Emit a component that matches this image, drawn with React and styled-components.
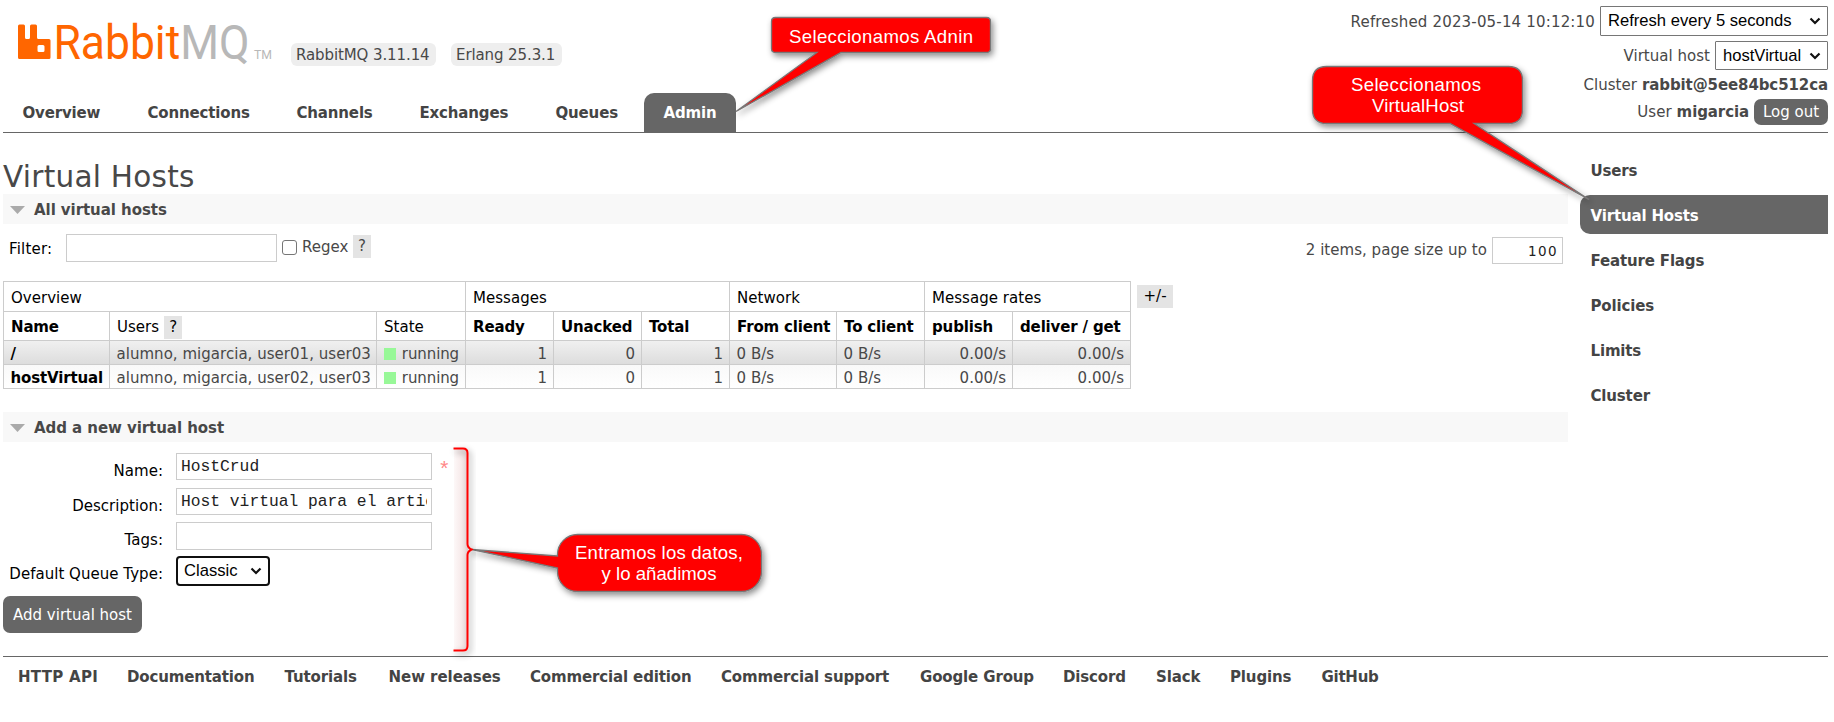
import React from "react";
import styled, { createGlobalStyle } from "styled-components";

const Global = createGlobalStyle`
  * { box-sizing: border-box; }
  body { margin: 0; background: #fff; color: #484848; font: 15px/20px Verdana, "DejaVu Sans", sans-serif; letter-spacing: 0.03px; }
  b { letter-spacing: -0.1px; }
`;

const Page = styled.div`
  position: relative;
  width: 1834px;
  height: 722px;
  overflow: hidden;
  padding: 0 6px 0 3px;
`;
const Header = styled.header`
  display: flex;
  justify-content: space-between;
  height: 133px;
  border-bottom: 1px solid #666;
`;
const Brand = styled.div`
  display: flex;
  height: 93px;
`;
const Logo = styled.svg`
  width: 288px;
  height: 72px;
  letter-spacing: 0;
`;
const Version = styled.span`
  height: 23px;
  margin: 43px 15px 0 0;
  width: ${(p) => p.$w}px;
  padding: 2px 5px;
  border-radius: 6px;
  background: #eee;
  letter-spacing: -0.1px;
  white-space: nowrap;
`;
const Tabs = styled.nav`
  display: flex;
  gap: 7px;
`;
const Tab = styled.a`
  width: ${(p) => p.$w}px;
  height: 39px;
  padding: 10px 0 0 19.5px;
  border-radius: 10px 10px 0 0;
  font-weight: bold;
  letter-spacing: -0.16px;
  white-space: nowrap;
  color: ${(p) => (p.$on ? "#fff" : "#444")};
  background: ${(p) => (p.$on ? "#666" : "none")};
`;
const Account = styled.div`
  display: flex;
  flex-direction: column;
  align-items: flex-end;
  padding-top: 6px;
`;
const AccountRow = styled.div`
  display: flex;
  align-items: center;
  gap: 5px;
  height: ${(p) => p.$h}px;
  white-space: nowrap;
`;
const Refreshed = styled.span`
  padding-top: 2px;
  letter-spacing: 0.17px;
`;
const Picker = styled.div`
  display: flex;
  align-items: center;
  justify-content: space-between;
  width: ${(p) => p.$w}px;
  height: ${(p) => p.$h}px;
  padding: 0 6px 0 ${(p) => (p.$focus ? 6 : 7)}px;
  border: ${(p) => (p.$focus ? "2px solid #101010" : "1px solid #767676")};
  border-radius: ${(p) => (p.$focus ? 4 : 1)}px;
  background: #fff;
  color: #000;
  font: 16.6px/20px Arial, "Liberation Sans", sans-serif;
  letter-spacing: 0;
  svg { width: 12px; height: 8px; }
`;
const Button = styled.button`
  width: ${(p) => p.$w}px;
  height: ${(p) => p.$h}px;
  padding: 0;
  border: 0;
  border-radius: 7px;
  background: #666;
  color: #fff;
  font: inherit;
  letter-spacing: 0;
`;
const Body = styled.div`
  display: flex;
  justify-content: space-between;
  height: 523px;
`;
const Main = styled.main`
  width: 1565px;
  padding-top: 25px;
`;
const Title = styled.h1`
  margin: 0;
  height: 36px;
  font-size: 29.5px;
  line-height: 39px;
  font-weight: normal;
  letter-spacing: 0.26px;
`;
const SectionBar = styled.h2`
  display: flex;
  align-items: center;
  gap: 9px;
  height: 30px;
  margin: 0;
  padding: 2px 0 0 7px;
  background: #f8f8f8;
  font-size: 15px;
  letter-spacing: -0.06px;
  svg { width: 15px; height: 8px; }
`;
const FilterRow = styled.div`
  display: flex;
  align-items: flex-start;
  height: 57px;
  padding: 10px 5px 0 6px;
`;
const FilterLabel = styled.label`
  width: 57px;
  padding-top: 5px;
  color: #000;
  letter-spacing: 0.2px;
`;
const Field = styled.input`
  width: ${(p) => p.$w}px;
  height: ${(p) => p.$h || 27}px;
  padding: 0 4px;
  border: 1px solid #ccc;
  outline: 0;
  color: #222;
  font: 16.3px "Courier New", "Liberation Mono", monospace;
  letter-spacing: 0;
`;
const SizeField = styled(Field)`
  font: 13.5px Verdana, "DejaVu Sans", sans-serif;
  letter-spacing: 1.4px;
  text-align: right;
`;
const Check = styled.span`
  width: 15px;
  height: 15px;
  margin: 6px 5px 0 5px;
  border: 1px solid #767676;
  border-radius: 3px;
`;
const RegexLabel = styled.span`
  width: 51px;
  padding-top: 3px;
`;
const Help = styled.span`
  display: inline-block;
  width: ${(p) => p.$w || 18}px;
  height: 23px;
  margin: ${(p) => p.$m || "0"};
  background: #e4e4e4;
  line-height: 23px;
  text-align: center;
`;
const PageSize = styled.div`
  display: flex;
  gap: 5px;
  margin: 3px 0 0 auto;
  line-height: 26px;
`;
const TableRow = styled.div`
  display: flex;
  align-items: flex-start;
  height: 131px;
  gap: 6px;
  color: #000;
`;
const Table = styled.table`
  table-layout: fixed;
  width: 1128px;
  border-collapse: collapse;
`;
const Th = styled.th`
  height: ${(p) => p.$h}px;
  padding: 2px 0 0 7px;
  border: 1px solid #ccc;
  text-align: left;
  white-space: nowrap;
  font-weight: ${(p) => (p.$bold ? "bold" : "normal")};
  letter-spacing: ${(p) => (p.$bold ? -0.16 : 0.03)}px;
`;
const Td = styled.td`
  height: 24px;
  padding: 2px 6px 0 6.5px;
  border: 1px solid #ccc;
  white-space: nowrap;
  text-align: ${(p) => (p.$right ? "right" : "left")};
  color: ${(p) => (p.$name ? "#000" : "#484848")};
  font-weight: ${(p) => (p.$name ? "bold" : "normal")};
  letter-spacing: ${(p) => (p.$name ? -0.14 : 0.03)}px;
`;
const Tr = styled.tr`
  background: ${(p) => (p.$alt ? "linear-gradient(#f0f0f0, #dcdcdc)" : "linear-gradient(#f9f9f9, #fff)")};
`;
const State = styled.span`
  display: flex;
  align-items: center;
  gap: 6px;
  letter-spacing: -0.1px;
  &::before { content: ""; width: 13px; height: 12px; background: #98f898; }
`;
const Form = styled.div`
  display: grid;
  grid-template-columns: 160px auto 1fr;
  grid-template-rows: 35px 34px 34px 40px;
  column-gap: 13px;
  padding-top: 11px;
`;
const FormLabel = styled.label`
  padding-top: 8px;
  color: #000;
  text-align: right;
  white-space: nowrap;
`;
const Required = styled.span`
  margin-left: -7px;
  padding-top: 8px;
  color: #f88;
  font: 21px/20px "Courier New", "Liberation Mono", monospace;
`;
const Side = styled.aside`
  width: 248px;
  padding-top: 17px;
`;
const SideLink = styled.a`
  display: block;
  height: 39px;
  margin-bottom: 6px;
  padding: 11px 0 0 10.5px;
  border-radius: 10px 0 0 10px;
  font-weight: bold;
  letter-spacing: -0.16px;
  color: ${(p) => (p.$on ? "#fff" : "#444")};
  background: ${(p) => (p.$on ? "#666" : "none")};
`;
const Footer = styled.footer`
  display: flex;
  gap: 30px;
  padding: 10px 15px;
  border-top: 1px solid #666;
  color: #444;
  font-weight: bold;
  letter-spacing: -0.12px;
`;
const FooterLink = styled.a`
  width: ${(p) => p.$w}px;
  letter-spacing: ${(p) => p.$ls}px;
  white-space: nowrap;
`;
const Annotations = styled.svg`
  position: absolute;
  left: 0;
  top: 0;
  pointer-events: none;
  text { font-family: Arial, "Liberation Sans", sans-serif; font-size: 18.6px; fill: #fff; letter-spacing: 0; }
`;

const Arrow = () => (
  <svg viewBox="0 0 12 8"><path d="M1.5 1.5 6 6l4.500-4.500" fill="none" stroke="#111" strokeWidth="2.200" /></svg>
);
const Triangle = () => (
  <svg viewBox="0 0 15 8"><path d="M0 0h15L7.500 8z" fill="#aaa" /></svg>
);

const tabs = [["Overview", 118], ["Connections", 142], ["Channels", 116], ["Exchanges", 129], ["Queues", 101], ["Admin", 92, true]];
const cols = [106, 267, 89, 88, 88, 88, 107, 88, 88, 118];
const rows = [
  ["/", "alumno, migarcia, user01, user03", "running", "1", "0", "1", "0 B/s", "0 B/s", "0.00/s", "0.00/s"],
  ["hostVirtual", "alumno, migarcia, user02, user03", "running", "1", "0", "1", "0 B/s", "0 B/s", "0.00/s", "0.00/s"],
];
const heads = ["Name", "Users", "State", "Ready", "Unacked", "Total", "From client", "To client", "publish", "deliver / get"];
const links = [["HTTP API", 79, 0.3], ["Documentation", 127.5], ["Tutorials", 74], ["New releases", 111.5, -0.05], ["Commercial edition", 161], ["Commercial support", 169], ["Google Group", 113], ["Discord", 63], ["Slack", 44], ["Plugins", 61.5], ["GitHub", 60, -0.25]];

const Callout = ({ d, lines }) => (
  <g>
    <path d={d} fill="#f00" stroke="#787878" strokeWidth="1.300" filter="url(#drop)" />
    {lines.map(([t, x, y, w]) => <text key={t} x={x} y={y} textLength={w}>{t}</text>)}
  </g>
);

export default function App() {
  return (
    <Page>
      <Global />
      <Header>
        <div>
          <Brand>
            <Logo viewBox="3 0 288 72">
              <path fill="#f60" fillRule="evenodd" d="M19.500 24.500h4q1.500 0 1.500 1.500v11.500q0 1.500 1.500 1.500h2q1.500 0 1.500-1.500V26q0-1.500 1.500-1.500h4Q37 24.500 37 26v11.500q0 1.500 1.500 1.500H49q1.500 0 1.500 1.500V57.500q0 1.500-1.500 1.500H19.500Q18 59 18 57.500V26q0-1.500 1.500-1.500zM39 45q-1.500 0-1.500 1.500v4q0 1.500 1.500 1.500h4q1.500 0 1.500-1.500v-4Q44.500 45 43 45z" />
              <text x="53.500" y="59" fontFamily="Roboto" fontSize="48.500" fill="#f60" textLength="196" lengthAdjust="spacingAndGlyphs">Rabbit<tspan fill="#b8b8b8">MQ</tspan></text>
              <text x="254" y="59" fontFamily="Roboto" fontSize="12.500" fill="#b8b8b8" textLength="18" lengthAdjust="spacingAndGlyphs">TM</text>
            </Logo>
            <Version $w={145}>RabbitMQ 3.11.14</Version>
            <Version $w={111}>Erlang 25.3.1</Version>
          </Brand>
          <Tabs>{tabs.map(([t, w, on]) => <Tab key={t} $w={w} $on={on}>{t}</Tab>)}</Tabs>
        </div>
        <Account>
          <AccountRow $h={30}><Refreshed>Refreshed 2023-05-14 10:12:10</Refreshed><Picker $w={228} $h={30}>Refresh every 5 seconds<Arrow /></Picker></AccountRow>
          <AccountRow $h={39}>Virtual host<Picker $w={113} $h={29}>hostVirtual<Arrow /></Picker></AccountRow>
          <AccountRow $h={20}>Cluster <b>rabbit@5ee84bc512ca</b></AccountRow>
          <AccountRow $h={33}>User <b>migarcia</b><Button $w={74} $h={26}>Log out</Button></AccountRow>
        </Account>
      </Header>
      <Body>
        <Main>
          <Title>Virtual Hosts</Title>
          <SectionBar><Triangle />All virtual hosts</SectionBar>
          <FilterRow>
            <FilterLabel>Filter:</FilterLabel>
            <Field $w={211} $h={28} />
            <Check />
            <RegexLabel>Regex</RegexLabel>
            <Help $m="1px 0 0">?</Help>
            <PageSize>2 items, page size up to<SizeField $w={71} defaultValue="100" /></PageSize>
          </FilterRow>
          <TableRow>
            <Table>
              <colgroup>{cols.map((w, i) => <col key={i} width={w} />)}</colgroup>
              <thead>
                <tr><Th $h={30} colSpan={3}>Overview</Th><Th colSpan={3}>Messages</Th><Th colSpan={2}>Network</Th><Th colSpan={2}>Message rates</Th></tr>
                <tr>{heads.map((h, i) => <Th key={h} $h={29} $bold={i !== 1 && i !== 2}>{h}{i === 1 && <Help $m="0 0 0 5px">?</Help>}</Th>)}</tr>
              </thead>
              <tbody>
                {rows.map((r, n) => (
                  <Tr key={n} $alt={n === 0}>
                    {r.map((c, i) => <Td key={i} $name={i === 0} $right={(i > 2 && i < 6) || i > 7}>{i === 2 ? <State>{c}</State> : c}</Td>)}
                  </Tr>
                ))}
              </tbody>
            </Table>
            <Help $w={36} $m="4px 0 0">+/-</Help>
          </TableRow>
          <SectionBar><Triangle />Add a new virtual host</SectionBar>
          <Form>
            <FormLabel>Name:</FormLabel><Field $w={256} defaultValue="HostCrud" /><Required>*</Required>
            <FormLabel>Description:</FormLabel><Field $w={256} defaultValue="Host virtual para el articulo" /><span />
            <FormLabel>Tags:</FormLabel><Field $w={256} $h={28} /><span />
            <FormLabel>Default Queue Type:</FormLabel><Picker $focus $w={94} $h={30}>Classic<Arrow /></Picker><span />
          </Form>
          <Button $w={139} $h={37}>Add virtual host</Button>
        </Main>
        <Side>{["Users", "Virtual Hosts", "Feature Flags", "Policies", "Limits", "Cluster"].map((t) => <SideLink key={t} $on={t === "Virtual Hosts"}>{t}</SideLink>)}</Side>
      </Body>
      <Footer>{links.map(([t, w, ls = -0.14]) => <FooterLink key={t} $w={w} $ls={ls}>{t}</FooterLink>)}</Footer>
      <Annotations width="1834" height="722">
        <defs>
          <filter id="drop" x="-20%" y="-30%" width="140%" height="170%"><feDropShadow dx="2" dy="3" stdDeviation="3" floodColor="#000" floodOpacity="0.45" /></filter>
          <linearGradient id="shade"><stop offset="0" stopColor="#fdf8f8" /><stop offset="1" stopColor="#f1dede" /></linearGradient>
        </defs>
        <Callout d="M775.500 17.500H986.500Q990.500 17.500 990.500 21.500V48.500Q990.500 52.500 986.500 52.500H841L736 111.500 817 52.500H775.500Q771.500 52.500 771.500 48.500V21.500Q771.500 17.500 775.500 17.500Z" lines={[["Seleccionamos Adnin", 789, 43, 184]]} />
        <Callout d="M1326.500 66.500H1508.500Q1522.500 66.500 1522.500 80.500V109.500Q1522.500 123.500 1508.500 123.500H1474L1589 199.500 1450 123.500H1326.500Q1312.500 123.500 1312.500 109.500V80.500Q1312.500 66.500 1326.500 66.500Z" lines={[["Seleccionamos", 1351, 91, 130], ["VirtualHost", 1372, 112, 92]]} />
        <Callout d="M577.500 534.500H741.500A20 20 0 0 1 761.500 554.500V571.500A20 20 0 0 1 741.500 591.500H577.500A20 20 0 0 1 557.500 571.500V568L472 549.500 557.500 556V554.500A20 20 0 0 1 577.500 534.500Z" lines={[["Entramos los datos,", 575, 558.500, 168], ["y lo añadimos", 601.500, 579.500, 115]]} />
        <path d="M454 449h10q4 0 4 4V646q0 4-4 4H454z" fill="url(#shade)" />
        <path d="M453.500 448.500H463Q467.500 448.500 467.500 453V544Q467.500 547.500 471.500 549.500 467.500 551.500 467.500 555V646Q467.500 650.500 463 650.500H453.500" fill="none" stroke="#f00" strokeWidth="2" filter="url(#drop)" />
      </Annotations>
    </Page>
  );
}
